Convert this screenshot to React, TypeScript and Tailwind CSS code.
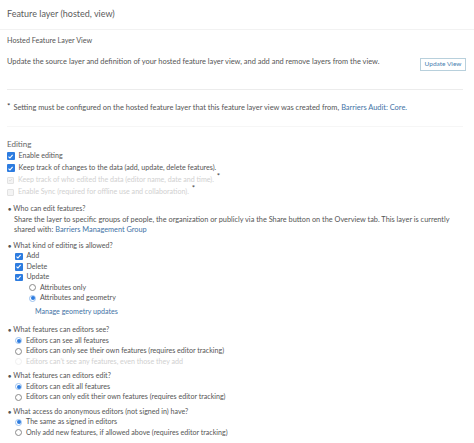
import React from "react";

const Check = ({ disabled = false, checked = true }: { disabled?: boolean; checked?: boolean }) =>
  disabled ? (
    <span className="w-[7px] h-[7px] shrink-0 rounded-[1px] border border-[#e2e2e2] bg-[#f4f4f4] flex items-center justify-center">
      {checked && (
        <svg viewBox="0 0 10 10" className="w-[6px] h-[6px]">
          <path d="M2 5.2 L4.2 7.3 L8 2.8" fill="none" stroke="#d8d8d8" strokeWidth="1.6" />
        </svg>
      )}
    </span>
  ) : (
    <span className="w-[7.5px] h-[7.5px] shrink-0 rounded-[1px] bg-[#2d7ce0] flex items-center justify-center">
      <svg viewBox="0 0 10 10" className="w-[7px] h-[7px]">
        <path d="M2.2 5.2 L4.2 7.2 L8 2.6" fill="none" stroke="#fff" strokeWidth="1.6" />
      </svg>
    </span>
  );

const Radio = ({ on = false, disabled = false }: { on?: boolean; disabled?: boolean }) =>
  on ? (
    <span className="w-[7px] h-[7px] shrink-0 rounded-full border border-[#9cc2ef] bg-white flex items-center justify-center">
      <span className="w-[4px] h-[4px] rounded-full bg-[#2d7ce0]" />
    </span>
  ) : (
    <span
      className={
        "w-[7px] h-[7px] shrink-0 rounded-full border bg-white " +
        (disabled ? "border-[#f0f0f0]" : "border-[#8a8a8a]")
      }
    />
  );

const Row = ({
  pl,
  control,
  children,
  disabled = false,
  h = "h-[10.5px]",
}: {
  pl: string;
  control: React.ReactNode;
  children: React.ReactNode;
  disabled?: boolean;
  h?: string;
}) => (
  <div className={"flex items-center gap-[4px] " + pl + " " + h}>
    {control}
    <span className={"whitespace-nowrap " + (disabled ? "text-[#d0d0d0]" : "text-[#555]")}>{children}</span>
  </div>
);

const Q = ({ children }: { children: React.ReactNode }) => (
  <div className="flex items-center h-[10.5px] pl-[1px] text-[#555]">
    <span className="text-[5.5px] mr-[2px]">●</span>
    <span>{children}</span>
  </div>
);

const Star = () => <span className="text-[#444] text-[8px] relative top-[-3px] ml-[1px]">*</span>;

export default function App() {
  return (
    <div
      className="w-[474px] h-[443px] bg-white overflow-hidden text-[7.1px] leading-[10.5px]"
      style={{ fontFamily: "Lato, 'Noto Sans', sans-serif" }}
    >
      <div className="h-[30px] flex items-center px-[7px] border-b border-[#f2f2f2] text-[9px] text-[#5c5c5c]">
        Feature layer (hosted, view)
      </div>
      <div className="px-[7px]">
        <div className="pt-[6px] h-[16px] leading-[10px] text-[7.2px] text-[#555]">Hosted Feature Layer View</div>
        <div className="flex items-start mt-[11px] h-[14px] justify-between mr-[1px]">
          <div className="leading-[10px] text-[7.45px] text-[#555]">
            Update the source layer and definition of your hosted feature layer view, and add and remove layers from the
            view.
          </div>
          <div className="mt-[1px] h-[13px] w-[46px] border border-[#b8d0dc] text-[#4a7fb0] text-[6.5px] flex items-center justify-center">
            Update View
          </div>
        </div>
        <div className="mt-[18px] mr-[4px] border-t border-[#ececec]" />
        <div className="mt-[13px] leading-[10px] text-[7.45px] text-[#555] flex items-center">
          <span className="text-[#333] text-[8px] relative top-[-2px] mr-[3px]">*</span>
          <span>Setting must be configured on the hosted feature layer that this feature layer view was created from,</span>
          <span className="text-[#3f73a6] ml-[2px]">Barriers Audit: Core.</span>
        </div>
        <div className="mt-[13px] mr-[4px] border-t border-[#f6f6f6]" />
        <div className="mt-[11px] h-[12px] flex items-center text-[8px] text-[#666]">Editing</div>
        <Row pl="pl-[0px]" h="h-[12px]" control={<Check />}>
          Enable editing
        </Row>
        <Row pl="pl-[0px]" h="h-[12px]" control={<Check />}>
          Keep track of changes to the data (add, update, delete features).
        </Row>
        <Row pl="pl-[0px]" h="h-[12px]" control={<Check disabled />} disabled>
          Keep track of who edited the data (editor name, date and time). <Star />
        </Row>
        <Row pl="pl-[0px]" h="h-[12px]" control={<Check disabled checked={false} />} disabled>
          Enable Sync (required for offline use and collaboration). <Star />
        </Row>
        <div className="h-[6px]" />
        <Q>Who can edit features?</Q>
        <div className="pl-[7px] text-[#555] text-[7.35px]">
          <div className="whitespace-nowrap">
            Share the layer to specific groups of people, the organization or publicly via the Share button on the
            Overview tab. This layer is currently
          </div>
          <div className="flex whitespace-nowrap">
            <span>shared with:</span>
            <span className="text-[#3f73a6] ml-[2px]">Barriers Management Group</span>
          </div>
        </div>
        <div className="h-[5px]" />
        <Q>What kind of editing is allowed?</Q>
        <Row pl="pl-[8px]" control={<Check />}>Add</Row>
        <Row pl="pl-[8px]" control={<Check />}>Delete</Row>
        <Row pl="pl-[8px]" control={<Check />}>Update</Row>
        <Row pl="pl-[22px]" control={<Radio />}>Attributes only</Row>
        <Row pl="pl-[22px]" control={<Radio on />}>Attributes and geometry</Row>
        <div className="pl-[28px] mt-[3px] h-[10.5px] flex items-center text-[#3f73a6]">Manage geometry updates</div>
        <div className="h-[8px]" />
        <Q>What features can editors see?</Q>
        <Row pl="pl-[8px]" control={<Radio on />}>Editors can see all features</Row>
        <Row pl="pl-[8px]" control={<Radio />}>Editors can only see their own features (requires editor tracking)</Row>
        <Row pl="pl-[8px]" control={<Radio disabled />} disabled>
          Editors can't see any features, even those they add
        </Row>
        <div className="h-[4px]" />
        <Q>What features can editors edit?</Q>
        <Row pl="pl-[8px]" control={<Radio on />}>Editors can edit all features</Row>
        <Row pl="pl-[8px]" control={<Radio />}>Editors can only edit their own features (requires editor tracking)</Row>
        <div className="h-[4px]" />
        <Q>What access do anonymous editors (not signed in) have?</Q>
        <Row pl="pl-[8px]" control={<Radio on />}>The same as signed in editors</Row>
        <Row pl="pl-[8px]" control={<Radio />}>Only add new features, if allowed above (requires editor tracking)</Row>
      </div>
    </div>
  );
}
